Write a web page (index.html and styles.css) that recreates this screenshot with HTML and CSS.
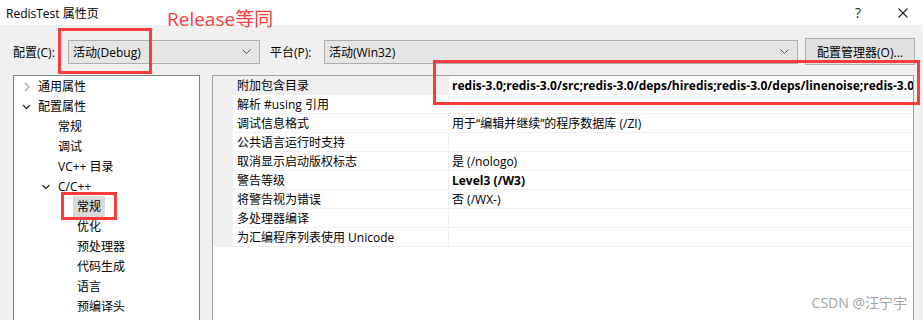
FILE: index.html
```html
<!DOCTYPE html>
<html lang="zh-CN">

<head>
    <meta charset="UTF-8">
    <meta name="viewport" content="width=device-width, initial-scale=1.0">
    <title>RedisTest 属性页</title>
    <link rel="stylesheet" href="styles.css">
</head>

<body>
    <div class="dialog">
        <div class="titlebar">
            <span class="title">RedisTest 属性页</span>
            <span class="help">?</span>
            <svg class="close" width="10" height="10" viewBox="0 0 10 10">
                <path d="M0.5 0.5 L9.5 9.5 M9.5 0.5 L0.5 9.5" stroke="#222" stroke-width="1.1" fill="none"/>
            </svg>
        </div>

        <div class="toolbar">
            <label class="cfg-label">配置(C):</label>
            <div class="combo combo-config">
                <span>活动(Debug)</span>
                <svg width="9" height="5" viewBox="0 0 9 5"><polyline points="0.5,0.5 4.5,4.5 8.5,0.5" stroke="#555" fill="none"/></svg>
            </div>
            <label class="plat-label">平台(P):</label>
            <div class="combo combo-platform">
                <span>活动(Win32)</span>
                <svg width="9" height="5" viewBox="0 0 9 5"><polyline points="0.5,0.5 4.5,4.5 8.5,0.5" stroke="#555" fill="none"/></svg>
            </div>
            <button class="manager">配置管理器(O)...</button>
        </div>

        <div class="main">
            <ul class="tree">
                <li class="lvl1"><span class="toggle"><svg width="16" height="20" viewBox="0 0 16 20"><polyline points="7,6 11,10 7,14" stroke="#a6a6a6" stroke-width="1.3" fill="none"/></svg></span><span class="label">通用属性</span></li>
                <li class="lvl1"><span class="toggle"><svg width="16" height="20" viewBox="0 0 16 20"><polyline points="5,8 8.5,11.5 12,8" stroke="#333" stroke-width="1.3" fill="none"/></svg></span><span class="label">配置属性</span></li>
                <li class="lvl2"><span class="toggle"></span><span class="label">常规</span></li>
                <li class="lvl2"><span class="toggle"></span><span class="label">调试</span></li>
                <li class="lvl2"><span class="toggle"></span><span class="label">VC++ 目录</span></li>
                <li class="lvl2"><span class="toggle"><svg width="16" height="20" viewBox="0 0 16 20"><polyline points="4.5,8 8,11.5 11.5,8" stroke="#333" stroke-width="1.3" fill="none"/></svg></span><span class="label">C/C++</span></li>
                <li class="lvl3"><span class="toggle"></span><span class="label selected">常规</span></li>
                <li class="lvl3"><span class="toggle"></span><span class="label">优化</span></li>
                <li class="lvl3"><span class="toggle"></span><span class="label">预处理器</span></li>
                <li class="lvl3"><span class="toggle"></span><span class="label">代码生成</span></li>
                <li class="lvl3"><span class="toggle"></span><span class="label">语言</span></li>
                <li class="lvl3"><span class="toggle"></span><span class="label">预编译头</span></li>
            </ul>

            <div class="grid">
                <div class="row current">
                    <div class="gutter"></div>
                    <div class="name">附加包含目录</div>
                    <div class="value bold">redis-3.0;redis-3.0/src;redis-3.0/deps/hiredis;redis-3.0/deps/linenoise;redis-3.0/deps/lua/src;%(AdditionalIncludeDirectories)</div>
                </div>
                <div class="row">
                    <div class="gutter"></div>
                    <div class="name">解析 #using 引用</div>
                    <div class="value"></div>
                </div>
                <div class="row">
                    <div class="gutter"></div>
                    <div class="name">调试信息格式</div>
                    <div class="value">用于“编辑并继续”的程序数据库 (/ZI)</div>
                </div>
                <div class="row">
                    <div class="gutter"></div>
                    <div class="name">公共语言运行时支持</div>
                    <div class="value"></div>
                </div>
                <div class="row">
                    <div class="gutter"></div>
                    <div class="name">取消显示启动版权标志</div>
                    <div class="value">是 (/nologo)</div>
                </div>
                <div class="row">
                    <div class="gutter"></div>
                    <div class="name">警告等级</div>
                    <div class="value bold">Level3 (/W3)</div>
                </div>
                <div class="row">
                    <div class="gutter"></div>
                    <div class="name">将警告视为错误</div>
                    <div class="value">否 (/WX-)</div>
                </div>
                <div class="row">
                    <div class="gutter"></div>
                    <div class="name">多处理器编译</div>
                    <div class="value"></div>
                </div>
                <div class="row">
                    <div class="gutter"></div>
                    <div class="name">为汇编程序列表使用 Unicode</div>
                    <div class="value"></div>
                </div>
            </div>
        </div>

        <!-- annotations drawn over the screenshot -->
        <div class="note">Release等同</div>
        <div class="mark mark-config"></div>
        <div class="mark mark-include"></div>
        <div class="mark mark-general"></div>
        <div class="watermark">CSDN @汪宁宇</div>
    </div>
</body>

</html>
```

FILE: styles.css
```css
* {
    box-sizing: border-box;
}

body {
    margin: 0;
    font-family: "Open Sans", "Noto Sans CJK SC", sans-serif;
    font-size: 12px;
    color: #000;
    background-color: #f0f0f0;
}

.dialog {
    position: relative;
    width: 923px;
    height: 320px;
    overflow: hidden;
}

.titlebar {
    display: flex;
    align-items: center;
    height: 25px;
    padding-left: 6px;
    background-color: #fff;
}

.title {
    flex: 1;
}

.help {
    width: 12px;
    margin-right: 31px;
    font-size: 14px;
    color: #222;
}

.close {
    margin-right: 15px;
}

.toolbar {
    display: flex;
    align-items: center;
    height: 27px;
    margin-top: 13px;
    padding-left: 13px;
}

.cfg-label {
    width: 55px;
}

.combo {
    display: flex;
    align-items: center;
    justify-content: space-between;
    height: 24px;
    padding: 0 8px 0 4px;
    background-color: #e5e5e5;
    border: 1px solid #adadad;
}

.combo-config {
    width: 192px;
}

.plat-label {
    width: 64px;
    padding-left: 10px;
}

.combo-platform {
    width: 474px;
}

.manager {
    width: 110px;
    height: 27px;
    margin-left: 7px;
    padding: 0;
    font-family: inherit;
    font-size: 12px;
    color: #000;
    background-color: #e1e1e1;
    border: 1px solid #adadad;
}

.main {
    display: flex;
    gap: 12px;
    margin-top: 10px;
    padding-left: 13px;
}

.tree {
    list-style: none;
    width: 187px;
    height: 260px;
    margin: 0;
    padding: 1px 0 0;
    background-color: #fff;
    border: 1px solid #828282;
}

.tree li {
    display: flex;
    height: 20px;
    line-height: 20px;
}

.tree .lvl1 {
    padding-left: 4px;
}

.tree .lvl2 {
    padding-left: 24px;
}

.tree .lvl3 {
    padding-left: 43px;
}

.toggle {
    width: 16px;
    height: 20px;
}

.toggle svg {
    display: block;
}

.label {
    padding: 0 4px;
}

.label.selected {
    margin-top: -1px;
    line-height: 21px;
    background-color: #d9d9d9;
}

.grid {
    width: 702px;
    height: 260px;
    background-color: #fff;
    border: 1px solid #a0a0a0;
    border-bottom: none;
}

.row {
    display: flex;
    height: 19px;
    line-height: 20px;
}

.gutter {
    width: 20px;
    background-color: #f0f0f0;
}

.name {
    width: 216px;
    padding-left: 4px;
    white-space: nowrap;
    overflow: hidden;
    border-right: 1px solid #f0f0f0;
    border-bottom: 1px solid #f0f0f0;
}

.row.current .name {
    background-color: #f0f0f0;
}

.value {
    flex: 1;
    min-width: 0;
    padding-left: 3px;
    white-space: nowrap;
    overflow: hidden;
    border-bottom: 1px solid #f0f0f0;
}

.bold {
    font-weight: bold;
}

.note {
    position: absolute;
    left: 167px;
    top: 7px;
    font-size: 19px;
    line-height: 24px;
    color: #fb3c3c;
}

.mark {
    position: absolute;
    border: 3px solid #fb3c3c;
}

.mark-config {
    left: 58px;
    top: 28px;
    width: 94px;
    height: 46px;
}

.mark-include {
    left: 433px;
    top: 60px;
    width: 487px;
    height: 45px;
}

.mark-general {
    left: 61px;
    top: 192px;
    width: 56px;
    height: 28px;
}

.watermark {
    position: absolute;
    right: 16px;
    bottom: 8px;
    font-size: 14px;
    color: #a3a3a3;
}
```
